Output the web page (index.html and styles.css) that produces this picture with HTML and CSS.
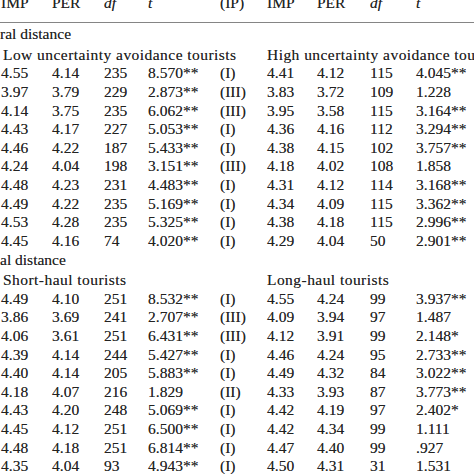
FILE: index.html
```html
<!DOCTYPE html>
<html>
<head>
<meta charset="utf-8">
<link rel="stylesheet" href="styles.css">
</head>
<body>
<div class="sheet">
<table class="stats">
<colgroup>
<col class="w1"><col class="w2"><col class="w3"><col class="w4"><col class="w5"><col class="w6"><col class="w7"><col class="w8"><col class="w9">
</colgroup>
<thead>
<tr><th class="c1">IMP</th><th>PER</th><th><i>df</i></th><th><i>t</i></th><th>(IP)</th><th>IMP</th><th>PER</th><th><i>df</i></th><th><i>t</i></th></tr>
</thead>
<tbody>
<tr class="sec"><td colspan="9">ral distance</td></tr>
<tr class="grp"><td colspan="5" class="sub-l">Low uncertainty avoidance tourists</td><td colspan="4" class="sub-r">High uncertainty avoidance tourists</td></tr>
<tr><td class="c1">4.55</td><td>4.14</td><td>235</td><td>8.570**</td><td>(I)</td><td>4.41</td><td>4.12</td><td>115</td><td>4.045**</td></tr>
<tr><td class="c1">3.97</td><td>3.79</td><td>229</td><td>2.873**</td><td>(III)</td><td>3.83</td><td>3.72</td><td>109</td><td>1.228</td></tr>
<tr><td class="c1">4.14</td><td>3.75</td><td>235</td><td>6.062**</td><td>(III)</td><td>3.95</td><td>3.58</td><td>115</td><td>3.164**</td></tr>
<tr><td class="c1">4.43</td><td>4.17</td><td>227</td><td>5.053**</td><td>(I)</td><td>4.36</td><td>4.16</td><td>112</td><td>3.294**</td></tr>
<tr><td class="c1">4.46</td><td>4.22</td><td>187</td><td>5.433**</td><td>(I)</td><td>4.38</td><td>4.15</td><td>102</td><td>3.757**</td></tr>
<tr><td class="c1">4.24</td><td>4.04</td><td>198</td><td>3.151**</td><td>(III)</td><td>4.18</td><td>4.02</td><td>108</td><td>1.858</td></tr>
<tr><td class="c1">4.48</td><td>4.23</td><td>231</td><td>4.483**</td><td>(I)</td><td>4.31</td><td>4.12</td><td>114</td><td>3.168**</td></tr>
<tr><td class="c1">4.49</td><td>4.22</td><td>235</td><td>5.169**</td><td>(I)</td><td>4.34</td><td>4.09</td><td>115</td><td>3.362**</td></tr>
<tr><td class="c1">4.53</td><td>4.28</td><td>235</td><td>5.325**</td><td>(I)</td><td>4.38</td><td>4.18</td><td>115</td><td>2.996**</td></tr>
<tr><td class="c1">4.45</td><td>4.16</td><td>74</td><td>4.020**</td><td>(I)</td><td>4.29</td><td>4.04</td><td>50</td><td>2.901**</td></tr>
<tr class="sec2"><td colspan="9">al distance</td></tr>
<tr class="grp2"><td colspan="5" class="sub-l">Short-haul tourists</td><td colspan="4" class="sub-r">Long-haul tourists</td></tr>
<tr><td class="c1">4.49</td><td>4.10</td><td>251</td><td>8.532**</td><td>(I)</td><td>4.55</td><td>4.24</td><td>99</td><td>3.937**</td></tr>
<tr><td class="c1">3.86</td><td>3.69</td><td>241</td><td>2.707**</td><td>(III)</td><td>4.09</td><td>3.94</td><td>97</td><td>1.487</td></tr>
<tr><td class="c1">4.06</td><td>3.61</td><td>251</td><td>6.431**</td><td>(III)</td><td>4.12</td><td>3.91</td><td>99</td><td>2.148*</td></tr>
<tr><td class="c1">4.39</td><td>4.14</td><td>244</td><td>5.427**</td><td>(I)</td><td>4.46</td><td>4.24</td><td>95</td><td>2.733**</td></tr>
<tr><td class="c1">4.40</td><td>4.14</td><td>205</td><td>5.883**</td><td>(I)</td><td>4.49</td><td>4.32</td><td>84</td><td>3.022**</td></tr>
<tr><td class="c1">4.18</td><td>4.07</td><td>216</td><td>1.829</td><td>(II)</td><td>4.33</td><td>3.93</td><td>87</td><td>3.773**</td></tr>
<tr><td class="c1">4.43</td><td>4.20</td><td>248</td><td>5.069**</td><td>(I)</td><td>4.42</td><td>4.19</td><td>97</td><td>2.402*</td></tr>
<tr><td class="c1">4.45</td><td>4.12</td><td>251</td><td>6.500**</td><td>(I)</td><td>4.42</td><td>4.34</td><td>99</td><td>1.111</td></tr>
<tr><td class="c1">4.48</td><td>4.18</td><td>251</td><td>6.814**</td><td>(I)</td><td>4.47</td><td>4.40</td><td>99</td><td>.927</td></tr>
<tr><td class="c1">4.35</td><td>4.04</td><td>93</td><td>4.943**</td><td>(I)</td><td>4.50</td><td>4.31</td><td>31</td><td>1.531</td></tr>
</tbody>
</table>
</div>
</body>
</html>
```
FILE: styles.css
```css
html, body {
  margin: 0;
  padding: 0;
  background: #ffffff;
  overflow: hidden;
}
body {
  width: 474px;
  height: 474px;
}
.sheet {
  width: 474px;
  height: 474px;
  overflow: hidden;
}
.stats {
  margin-top: -6px;
  border-collapse: collapse;
  table-layout: fixed;
  width: 506px;
  font-family: "Liberation Serif", "Times New Roman", serif;
  font-size: 15.5px;
  color: #222222;
  text-shadow: 0 0 0.6px rgba(0, 0, 0, 0.45);
}
.w1 { width: 52px; }
.w2 { width: 52px; }
.w3 { width: 44px; }
.w4 { width: 72px; }
.w5 { width: 47px; }
.w6 { width: 50px; }
.w7 { width: 53px; }
.w8 { width: 46px; }
.w9 { width: 90px; }
.stats th,
.stats td {
  padding: 0;
  text-align: left;
  font-weight: normal;
  white-space: nowrap;
  line-height: 18.6px;
}
.stats thead th {
  padding-bottom: 9px;
  border-bottom: 1.5px solid #858585;
}
.stats .c1 {
  padding-left: 1px;
}
.stats .sec td {
  padding-top: 2.6px;
}
.stats .grp td {
  padding-top: 2px;
}
.stats .sec2 td {
  padding-top: 0.6px;
}
.stats .grp2 td {
  padding-top: 1px;
  padding-bottom: 0.8px;
}
.stats .sub-l {
  padding-left: 3px;
  letter-spacing: 0.45px;
}
.stats .sub-r {
  letter-spacing: 0.45px;
}
```
